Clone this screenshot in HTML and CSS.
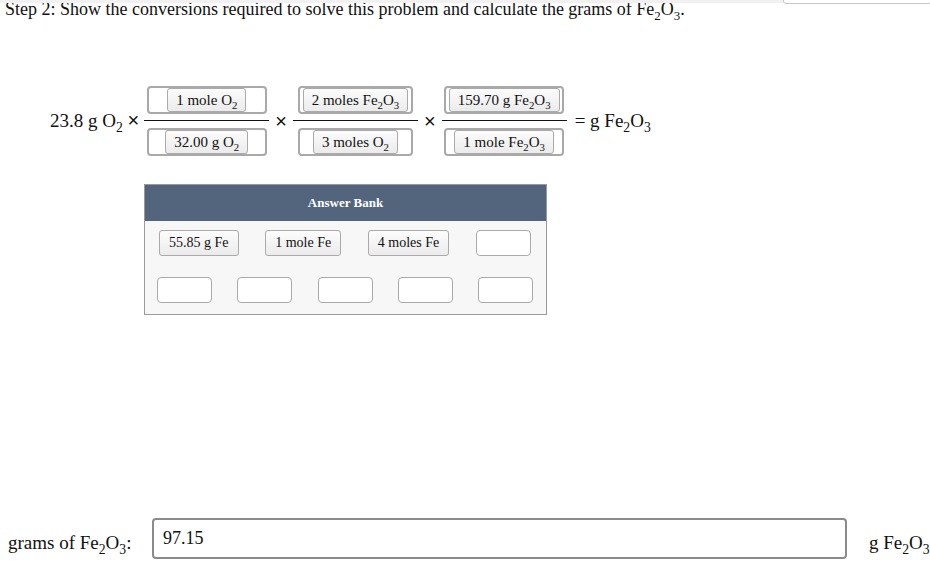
FILE: index.html
```html
<!DOCTYPE html>
<html lang="en">
  <head>
    <meta charset="UTF-8" />
    <meta name="viewport" content="width=device-width, initial-scale=1.0" />
    <title>Step 2</title>
    <link rel="stylesheet" href="styles.css">
  </head>
  <body>
    <div class="topbar">
      <div class="topbar-box"></div>
    </div>
    <div class="heading-clip">
      <p class="heading">Step 2: Show the conversions required to solve this problem and calculate the grams of Fe<sub>2</sub>O<sub>3</sub>.</p>
    </div>

    <div class="equation">
      <span class="given">23.8 g O<sub>2</sub> <span class="mult">&times;</span></span>

      <div class="fraction f1">
        <div class="slot"><span class="tile">1 mole O<sub>2</sub></span></div>
        <div class="bar"></div>
        <div class="slot"><span class="tile">32.00 g O<sub>2</sub></span></div>
      </div>
      <span class="times mult">&times;</span>

      <div class="fraction f2">
        <div class="slot"><span class="tile">2 moles Fe<sub>2</sub>O<sub>3</sub></span></div>
        <div class="bar"></div>
        <div class="slot"><span class="tile">3 moles O<sub>2</sub></span></div>
      </div>
      <span class="times mult">&times;</span>

      <div class="fraction f3">
        <div class="slot"><span class="tile">159.70 g Fe<sub>2</sub>O<sub>3</sub></span></div>
        <div class="bar"></div>
        <div class="slot"><span class="tile">1 mole Fe<sub>2</sub>O<sub>3</sub></span></div>
      </div>

      <span class="result">= g Fe<sub>2</sub>O<sub>3</sub></span>
    </div>

    <div class="bank">
      <div class="bank-head">Answer Bank</div>
      <div class="bank-body">
        <div class="bank-row first">
          <span class="tile">55.85 g Fe</span>
          <span class="tile">1 mole Fe</span>
          <span class="tile">4 moles Fe</span>
          <span class="empty"></span>
        </div>
        <div class="bank-row second">
          <span class="empty"></span>
          <span class="empty"></span>
          <span class="empty"></span>
          <span class="empty"></span>
          <span class="empty"></span>
        </div>
      </div>
    </div>

    <div class="answer">
      <label class="answer-label">grams of Fe<sub>2</sub>O<sub>3</sub>:</label>
      <div class="answer-input">97.15</div>
      <span class="answer-unit">g Fe<sub>2</sub>O<sub>3</sub></span>
    </div>
  </body>
</html>
```

FILE: styles.css
```css
body {
  margin: 0;
  font-family: "Liberation Serif", "Times New Roman", serif;
  color: #111;
  background: #fff;
  width: 930px;
  height: 561px;
  overflow: hidden;
  position: relative;
}

sub {
  font-size: 0.72em;
  vertical-align: -0.35em;
  line-height: 0;
}

/* strip left over from the scrolled frame above */
.topbar {
  height: 3px;
  background: #f1f1f1;
  position: relative;
  z-index: 2;
}

.topbar-box {
  position: absolute;
  left: 783px;
  right: -2px;
  top: -6px;
  height: 8px;
  border: 1px solid #c8c8c8;
  border-radius: 3px;
  background: #fff;
}

.heading-clip {
  height: 26px;
  overflow: hidden;
  margin-top: -3px;
}

.heading {
  margin: -2px 0 0 5px;
  font-size: 18px;
  line-height: 22px;
  white-space: nowrap;
}

/* conversion factors */
.equation {
  display: flex;
  align-items: center;
  margin-top: 59px;
  padding-left: 50px;
  height: 71px;
  font-size: 19px;
}

.given {
  margin-right: 5px;
}

.mult {
  font-family: "Liberation Sans", Arial, sans-serif;
  font-size: 20px;
  line-height: 1;
}

.times {
  margin: 0 6px;
}

.result {
  margin-left: 8px;
}

.fraction {
  display: flex;
  flex-direction: column;
  align-items: center;
  width: 125px;
}

.fraction.f2 .slot {
  width: 111px;
}

.fraction .bar {
  align-self: stretch;
  height: 0;
  border-top: 1.5px solid #111;
  margin: 6px 0 7px;
}

.slot {
  width: 116px;
  height: 24px;
  border: 2px solid #a9a9a9;
  border-radius: 4px;
  display: flex;
  align-items: center;
  justify-content: center;
  background: #fff;
}

.tile {
  display: inline-block;
  height: 24px;
  line-height: 22px;
  padding: 0 8px;
  font-size: 15px;
  text-align: center;
  border: 1px solid #aaa;
  border-radius: 3px;
  background: linear-gradient(#fcfcfc, #ebebeb);
  box-sizing: border-box;
  white-space: nowrap;
}

/* answer bank */
.bank {
  width: 401px;
  margin: 28px 0 0 144px;
  border: 1px solid #9a9a9a;
  background: #f7f7f7;
}

.bank-head {
  background: #52657d;
  color: #fff;
  font-weight: bold;
  font-size: 13px;
  text-align: center;
  height: 36px;
  line-height: 36px;
}

.bank-body {
  padding: 9px 13px 11px 12px;
}

.bank-row {
  display: flex;
  justify-content: space-between;
  align-items: center;
}

.bank-row.first {
  padding: 0 2px 0 2px;
}

.bank-row.second {
  margin-top: 21px;
}

.bank .tile {
  height: 26px;
  line-height: 24px;
  font-size: 14px;
  padding: 0 9px;
}

.empty {
  width: 53px;
  height: 24px;
  border: 1px solid #aaa;
  border-radius: 4px;
  background: #fff;
}

/* final answer */
.answer {
  position: absolute;
  left: 8px;
  right: 0;
  top: 518px;
  display: flex;
  align-items: center;
  font-size: 19px;
}

.answer-label {
  margin-top: 8px;
  width: 144px;
}

.answer-input {
  width: 682px;
  height: 37px;
  border: 2px solid #8a8a8a;
  border-radius: 4px;
  padding-left: 9px;
  font-size: 18px;
  line-height: 37px;
}

.answer-unit {
  margin-left: 22px;
  margin-top: 8px;
  white-space: nowrap;
}
```
